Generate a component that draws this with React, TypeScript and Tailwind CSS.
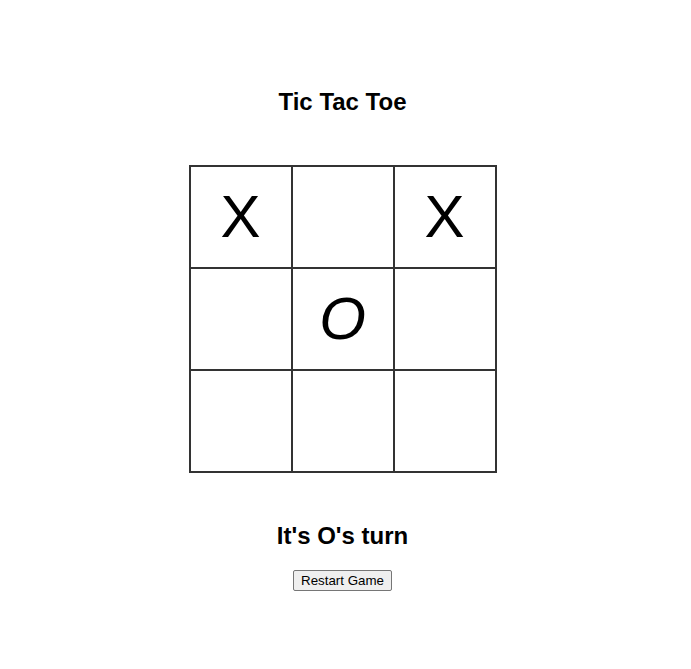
const board: (string | null)[] = ["X", null, "X", null, "O", null, null, null, null];

const Cell = ({ value }: { value: string | null }) => (
  <button className="w-[100px] h-[100px] bg-white flex items-center justify-center text-black text-[60px] leading-none font-['Liberation_Sans',Arial,sans-serif]">
    {value === "O" ? <span className="italic">O</span> : value}
  </button>
);

export default function App() {
  return (
    <div className="w-[685px] flex flex-col items-center pt-[88px] bg-white text-black font-['Liberation_Sans',Arial,sans-serif]">
      <h1 className="text-[24px] leading-[27px] font-bold">Tic Tac Toe</h1>

      <div className="mt-[50px] grid grid-cols-[repeat(3,100px)] gap-[2px] p-[2px] bg-[#333333]">
        {board.map((v, i) => (
          <Cell key={i} value={v} />
        ))}
      </div>

      <h2 className="mt-[49px] text-[24px] leading-[27px] font-bold">It's O's turn</h2>

      <button className="mt-[21px] h-[21px] px-[7px] text-[13.33px] leading-none bg-[#efefef] border border-[#767676] rounded-[2px] text-black">
        Restart Game
      </button>
    </div>
  );
}
